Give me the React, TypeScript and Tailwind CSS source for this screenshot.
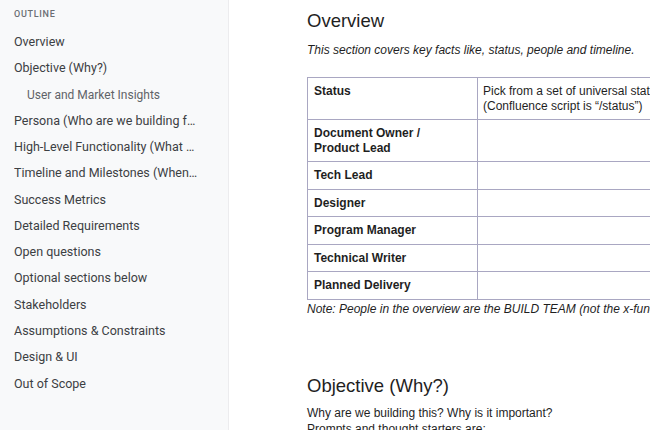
import React from "react";

const items: { label: string; sub?: boolean }[] = [
  { label: "Overview" },
  { label: "Objective (Why?)" },
  { label: "User and Market Insights", sub: true },
  { label: "Persona (Who are we building for?)" },
  { label: "High-Level Functionality (What are we building?)" },
  { label: "Timeline and Milestones (When will it ship?)" },
  { label: "Success Metrics" },
  { label: "Detailed Requirements" },
  { label: "Open questions" },
  { label: "Optional sections below" },
  { label: "Stakeholders" },
  { label: "Assumptions & Constraints" },
  { label: "Design & UI" },
  { label: "Out of Scope" },
];

const rows: { label: string[]; value?: string[] }[] = [
  { label: ["Status"], value: ["Pick from a set of universal statuses and labels", "(Confluence script is \u201c/status\u201d)"] },
  { label: ["Document Owner /", "Product Lead"] },
  { label: ["Tech Lead"] },
  { label: ["Designer"] },
  { label: ["Program Manager"] },
  { label: ["Technical Writer"] },
  { label: ["Planned Delivery"] },
];

export default function App() {
  return (
    <div className="flex w-[650px] h-[430px] overflow-hidden bg-white">
      <aside
        className="w-[229px] shrink-0 h-full bg-[#f8f9fa] border-r border-[#ececee] pt-[8px]"
        style={{ fontFamily: "Roboto, 'Noto Sans', sans-serif" }}
      >
        <div className="pl-[14px] text-[9px] leading-[12px] font-medium tracking-[0.08em] text-[#6a6e73]">
          OUTLINE
        </div>
        <div className="mt-[9px]">
          {items.map((it) => (
            <div
              key={it.label}
              className={
                it.sub
                  ? "h-[26.3px] flex items-center pl-[27px] pr-[30px] text-[12px] text-[#5f6368]"
                  : "h-[26.3px] flex items-center pl-[14px] pr-[30px] text-[12.5px] text-[#3c4043]"
              }
            >
              <span className="truncate block w-full">{it.label}</span>
            </div>
          ))}
        </div>
      </aside>
      <main
        className="flex-1 min-w-0 overflow-hidden pl-[78px] pt-[9px] text-[#1f1f1f]"
        style={{ fontFamily: "'Liberation Sans', Arial, sans-serif" }}
      >
        <h2 className="text-[18.5px] leading-[24px] font-normal whitespace-nowrap">Overview</h2>
        <p className="mt-[9px] text-[12px] leading-[16px] italic whitespace-nowrap">
          This section covers key facts like, status, people and timeline.
        </p>
        <table className="mt-[19px] w-[520px] border-collapse text-[12px] leading-[14.5px]">
          <tbody>
            {rows.map((r, i) => (
              <tr key={i}>
                <td className="w-[170px] border border-[#a9a7c2] px-[6px] py-[6px] align-top font-bold whitespace-nowrap">
                  {r.label.map((l, j) => (
                    <div key={j}>{l}</div>
                  ))}
                </td>
                <td className="border border-[#a9a7c2] px-[5px] py-[6px] align-top whitespace-nowrap">
                  {r.value ? r.value.map((l, j) => <div key={j}>{l}</div>) : null}
                </td>
              </tr>
            ))}
          </tbody>
        </table>
        <p className="mt-[1px] text-[12px] leading-[16px] italic whitespace-nowrap">
          Note: People in the overview are the BUILD TEAM (not the x-functional team)
        </p>
        <h2 className="mt-[57px] text-[18.5px] leading-[24px] font-normal whitespace-nowrap">Objective (Why?)</h2>
        <p className="mt-[7px] text-[12px] leading-[16px] whitespace-nowrap">
          Why are we building this? Why is it important?
          <br />
          Prompts and thought starters are:
        </p>
      </main>
    </div>
  );
}
